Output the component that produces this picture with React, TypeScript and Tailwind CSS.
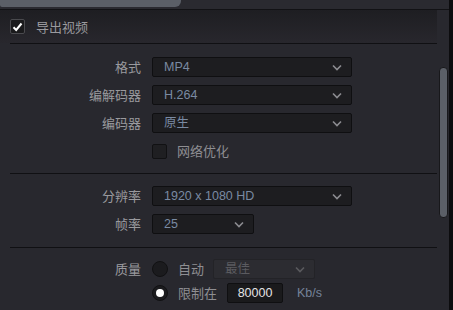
const font = { fontFamily: '"Noto Sans CJK SC", "Noto Sans", sans-serif' };
const latin = { fontFamily: '"Liberation Sans", "Noto Sans CJK SC", sans-serif' };

function Chevron({ dim = false }: { dim?: boolean }) {
  return (
    <svg width="10" height="7" viewBox="0 0 10 7" className="shrink-0">
      <path d="M1 1.5 L5 5.5 L9 1.5" fill="none" stroke={dim ? '#5a5a5e' : '#8c8c90'} strokeWidth="1.6" />
    </svg>
  );
}

function Select({ value, width = 'w-[200px]', dim = false }: { value: string; width?: string; dim?: boolean }) {
  return (
    <div
      className={`${width} h-[20px] rounded-[2px] flex items-center justify-between pl-[11px] pr-[9px] ${
        dim ? 'bg-[#2c2c31] border border-[#232327]' : 'bg-[#1d1d20] border border-[#0f0f11]'
      }`}
    >
      <span className={`text-[12.5px] leading-none ${dim ? 'text-[#5b5b60]' : 'text-[#7a8aa2]'}`} style={latin}>
        {value}
      </span>
      <Chevron dim={dim} />
    </div>
  );
}

function Row({ label, children }: { label: string; children: React.ReactNode }) {
  return (
    <div className="flex items-center h-[20px]">
      <div className="w-[142px] text-right text-[13px] text-[#9a9a9e] pr-[1px]">{label}</div>
      <div className="ml-[10px] flex items-center">{children}</div>
    </div>
  );
}

function Radio({ checked = false }: { checked?: boolean }) {
  return (
    <div className="w-[16px] h-[16px] rounded-full bg-[#1b1b1e] border border-[#111113] flex items-center justify-center">
      {checked && <div className="w-[8px] h-[8px] rounded-full bg-white" />}
    </div>
  );
}

export default function App() {
  return (
    <div className="w-[453px] h-[310px] bg-[#28282e] relative overflow-hidden flex" style={font}>
      <div className="flex-1 flex flex-col">
        <div className="h-[9px] bg-[#2a2a30]">
          <div className="w-[181px] h-[7px] bg-[#5b5f67] rounded-br-[6px] rounded-bl-[2px]" />
        </div>
        <div className="h-[1px] bg-[#121215]" />
        <div className="w-[437px] h-[33px] bg-gradient-to-b from-[#1e1e22] to-[#28272d] flex items-center pl-[10px]">
          <div className="w-[15px] h-[15px] bg-[#1a1a1c] border border-[#4a4a4e] rounded-[2px] flex items-center justify-center">
            <svg width="11" height="10" viewBox="0 0 11 10">
              <path d="M1.5 5.2 L4.2 8 L9.5 1.5" fill="none" stroke="#ffffff" strokeWidth="2" />
            </svg>
          </div>
          <span className="ml-[11px] text-[13px] text-[#9a9a9e]">导出视频</span>
        </div>
        <div className="ml-[10px] w-[427px] h-[1px] bg-[#101013]" />

        <div className="flex flex-col gap-[8px] pt-[13px] pb-[12px]">
          <Row label="格式">
            <Select value="MP4" />
          </Row>
          <Row label="编解码器">
            <Select value="H.264" />
          </Row>
          <Row label="编码器">
            <Select value="原生" />
          </Row>
          <Row label="">
            <div className="w-[15px] h-[15px] bg-[#1f1f22] border border-[#111113] rounded-[2px]" />
            <span className="ml-[10px] text-[13px] text-[#8e8e92]">网络优化</span>
          </Row>
        </div>
        <div className="ml-[10px] w-[427px] h-[1px] bg-[#101013]" />

        <div className="flex flex-col gap-[8px] pt-[12px] pb-[13px]">
          <Row label="分辨率">
            <Select value="1920 x 1080 HD" />
          </Row>
          <Row label="帧率">
            <Select value="25" width="w-[102px]" />
          </Row>
        </div>
        <div className="ml-[10px] w-[427px] h-[1px] bg-[#101013]" />

        <div className="flex flex-col gap-[4px] pt-[11px]">
          <Row label="质量">
            <Radio />
            <span className="ml-[10px] text-[13px] text-[#8e8e92]">自动</span>
            <div className="ml-[9px]">
              <Select value="最佳" width="w-[102px]" dim />
            </div>
          </Row>
          <Row label="">
            <Radio checked />
            <span className="ml-[10px] text-[13px] text-[#8e8e92]">限制在</span>
            <div className="ml-[10px] w-[56px] h-[20px] bg-[#1a1a1c] border border-[#0f0f11] rounded-[2px] flex items-center justify-center">
              <span className="text-[12.5px] leading-none text-[#e4e4e6]" style={latin}>
                80000
              </span>
            </div>
            <span className="ml-[14px] text-[12.5px] text-[#75839a]" style={latin}>
              Kb/s
            </span>
          </Row>
        </div>
      </div>
      <div className="w-[4px] bg-[#0c0c0e]" />
      <div className="absolute left-[439px] top-[67px] w-[9px] h-[151px] rounded-[4px] bg-[#5b5f67] border border-[#18181b]" />
    </div>
  );
}
